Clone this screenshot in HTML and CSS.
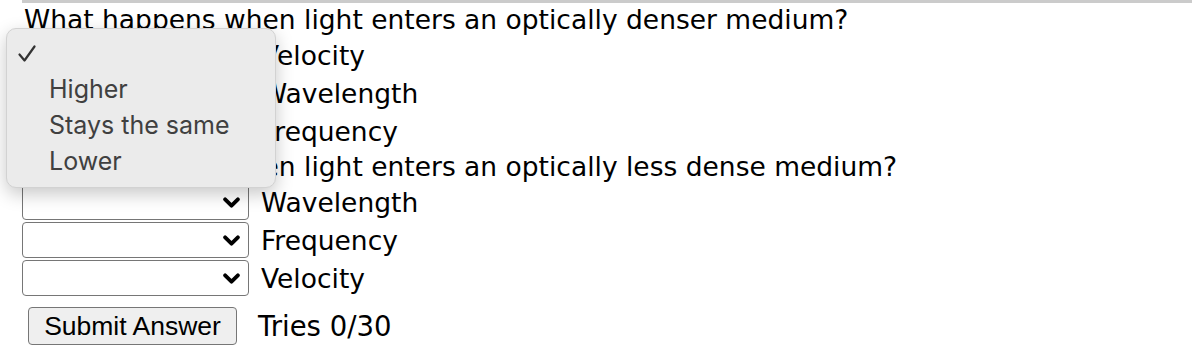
FILE: index.html
```html
<!DOCTYPE html>
<html lang="en">
<head>
    <meta charset="UTF-8">
    <title>Quiz</title>
    <link rel="stylesheet" href="styles.css">
</head>
<body>
    <div class="quiz">
        <div class="rule"></div>

        <p class="question">What happens when light enters an optically denser medium?</p>
        <div class="row">
            <div class="select"><svg class="chevron" viewBox="0 0 16 10"><path d="M2 2 L8 8 L14 2"/></svg></div>
            <span class="label">Velocity</span>
        </div>
        <div class="row">
            <div class="select"><svg class="chevron" viewBox="0 0 16 10"><path d="M2 2 L8 8 L14 2"/></svg></div>
            <span class="label">Wavelength</span>
        </div>
        <div class="row">
            <div class="select"><svg class="chevron" viewBox="0 0 16 10"><path d="M2 2 L8 8 L14 2"/></svg></div>
            <span class="label">Frequency</span>
        </div>

        <p class="question">What happens when light enters an optically less dense medium?</p>
        <div class="row">
            <div class="select"><svg class="chevron" viewBox="0 0 16 10"><path d="M2 2 L8 8 L14 2"/></svg></div>
            <span class="label">Wavelength</span>
        </div>
        <div class="row">
            <div class="select"><svg class="chevron" viewBox="0 0 16 10"><path d="M2 2 L8 8 L14 2"/></svg></div>
            <span class="label">Frequency</span>
        </div>
        <div class="row">
            <div class="select"><svg class="chevron" viewBox="0 0 16 10"><path d="M2 2 L8 8 L14 2"/></svg></div>
            <span class="label">Velocity</span>
        </div>

        <div class="submit-row">
            <button type="button" class="submit">Submit Answer</button>
            <span class="tries">Tries 0/30</span>
        </div>
    </div>

    <!-- open popup of the first select -->
    <div class="menu">
        <div class="menu-item">
            <svg class="check" viewBox="0 0 18 17"><path d="M1.5 9.5 L6.5 15.5 L16.5 1.5"/></svg>
        </div>
        <div class="menu-item">Higher</div>
        <div class="menu-item">Stays the same</div>
        <div class="menu-item">Lower</div>
    </div>
</body>
</html>
```

FILE: styles.css
```css
body {
    margin: 0;
    padding: 0;
    background: #fff;
    color: #000;
    font-family: "DejaVu Sans", Verdana, sans-serif;
}

.quiz {
    padding-left: 22px;
}

.rule {
    height: 3px;
    background-color: #cbcbcb;
}

.question {
    margin: 0;
    padding-left: 2px;
    font-size: 26.5px;
    line-height: 33px;
    white-space: nowrap;
}

.row {
    display: flex;
    align-items: center;
    height: 38px;
    gap: 12px;
}

.select {
    width: 227px;
    height: 36px;
    box-sizing: border-box;
    border: 1.5px solid #767676;
    border-radius: 4px;
    background: #fff;
    display: flex;
    align-items: center;
    justify-content: flex-end;
    padding-right: 8px;
}

.chevron {
    width: 17px;
    height: 11px;
    fill: none;
    stroke: #000;
    stroke-width: 3.6;
    stroke-linecap: round;
    stroke-linejoin: round;
}

.label {
    font-size: 26.5px;
}

.submit-row {
    display: flex;
    align-items: center;
    gap: 21px;
    margin-top: 10px;
    padding-left: 6px;
}

.submit {
    font-family: "Liberation Sans", Arial, sans-serif;
    font-size: 26.5px;
    color: #000;
    background-color: #efefef;
    border: 1.5px solid #767676;
    border-radius: 4px;
    height: 38px;
    width: 209px;
    padding: 0;
}

.tries {
    font-size: 27.5px;
}

.menu {
    position: absolute;
    left: 6px;
    top: 28px;
    width: 270px;
    height: 160px;
    box-sizing: border-box;
    padding-top: 6px;
    background-color: #ebebeb;
    border: 1px solid #d2d2d2;
    border-radius: 10px;
    box-shadow: 0 6px 18px rgba(0, 0, 0, 0.22);
    font-family: Inter, "Noto Sans", sans-serif;
    font-size: 25px;
    color: #404040;
}

.menu-item {
    height: 36px;
    line-height: 36px;
    padding-left: 42px;
    position: relative;
}

.check {
    position: absolute;
    left: 11px;
    top: 10px;
    width: 18px;
    height: 17px;
    fill: none;
    stroke: #333;
    stroke-width: 2.2;
    stroke-linecap: round;
    stroke-linejoin: round;
}
```
